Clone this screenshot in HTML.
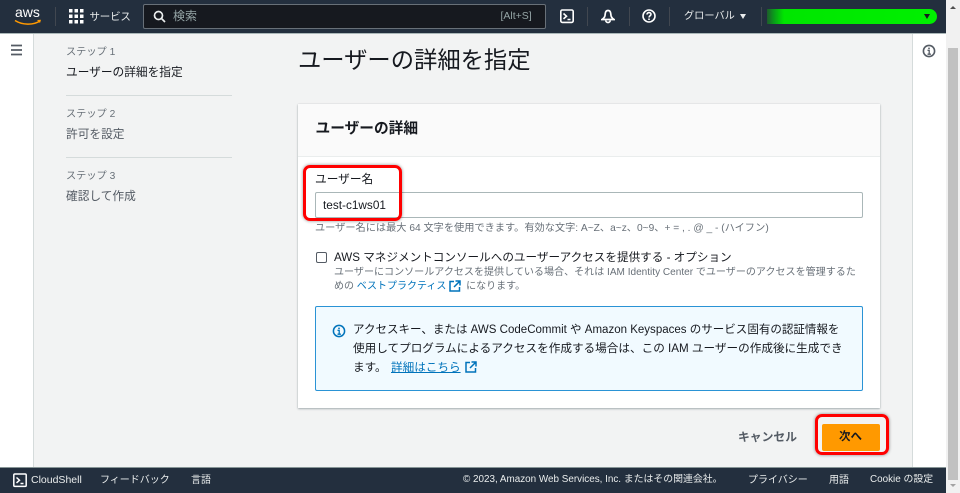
<!DOCTYPE html>
<html lang="ja"><head><meta charset="utf-8">
<style>
html,body{margin:0;padding:0;width:960px;height:493px;overflow:hidden;background:#f2f3f3}
body{position:relative;font-family:"Liberation Sans","Noto Sans CJK JP",sans-serif;color:#16191f}
.a{position:absolute}
.t{position:absolute;white-space:nowrap;line-height:16px}
svg{position:absolute;display:block}
.s{color:#687078}
.n{color:#eaeded}
a{color:#0073bb;text-decoration:none}
</style></head><body>
<!-- panels -->
<div class="a" style="left:0;top:33px;width:33px;height:435px;background:#fff;border-right:1px solid #d5dbdb"></div>
<div class="a" style="left:912px;top:33px;width:34px;height:435px;background:#fff;border-left:1px solid #d5dbdb;box-sizing:border-box"></div>
<!-- nav -->
<div class="a" style="left:0;top:0;width:946px;height:33.500px;background:#232f3e;border-bottom:1px solid #aab7b8;box-sizing:border-box"></div>
<div class="t" style="left:15px;top:5px;font-size:14px;color:#fff;line-height:14px">aws</div>
<svg style="left:14px;top:19px" width="28" height="7" viewBox="0 0 28 7"><path d="M1 1.500C8 6 19 6.500 26 2" stroke="#f90" stroke-width="1.500" fill="none"/><path d="M23 1l4-.3-1 3.300z" fill="#f90"/></svg>
<div class="a" style="left:55px;top:7px;width:1px;height:19px;background:#414750"></div>
<svg style="left:69px;top:9px" width="15" height="15" viewBox="0 0 15 15" fill="#fff"><rect x="0" y="0" width="3.500" height="3.500"/><rect x="5.500" y="0" width="3.500" height="3.500"/><rect x="11" y="0" width="3.500" height="3.500"/><rect x="0" y="5.500" width="3.500" height="3.500"/><rect x="5.500" y="5.500" width="3.500" height="3.500"/><rect x="11" y="5.500" width="3.500" height="3.500"/><rect x="0" y="11" width="3.500" height="3.500"/><rect x="5.500" y="11" width="3.500" height="3.500"/><rect x="11" y="11" width="3.500" height="3.500"/></svg>
<div class="t n" style="left:89.500px;top:9px;font-size:10.500px;letter-spacing:-.2px">サービス</div>
<div class="a" style="left:143px;top:4px;width:403px;height:25px;background:#16191f;border:1px solid #687078;border-radius:2px;box-sizing:border-box"></div>
<svg style="left:153px;top:10px" width="13" height="13" viewBox="0 0 13 13" fill="none" stroke="#eaeded" stroke-width="1.700"><circle cx="5.500" cy="5.500" r="4"/><path d="M8.500 8.500L12 12"/></svg>
<div class="t" style="left:173px;top:8px;font-size:12px;color:#95a5a6">検索</div>
<div class="t" style="left:500.500px;top:9px;font-size:10.500px;color:#95a5a6;line-height:15px">[Alt+S]</div>
<svg style="left:560px;top:9px" width="14" height="15" viewBox="0 0 14 15" fill="none" stroke="#fff" stroke-width="1.600"><rect x=".8" y="1" width="12.400" height="12.400" rx="1.500"/><path d="M3.500 4.500l3 2.700-3 2.700M7.500 10.500h3"/></svg>
<div class="a" style="left:587px;top:7px;width:1px;height:19px;background:#414750"></div>
<svg style="left:601px;top:9px" width="14" height="15" viewBox="0 0 14 15" fill="none" stroke="#fff" stroke-width="1.700"><path d="M7 1.500C4.500 1.500 4.200 4 4 6.500 3.800 8 2.500 9.500 1 10.500h12C11.500 9.500 10.200 8 10 6.500 9.800 4 9.500 1.500 7 1.500z"/><path d="M4.800 11.500a2.200 2 0 0 0 4.400 0"/></svg>
<div class="a" style="left:629px;top:7px;width:1px;height:19px;background:#414750"></div>
<svg style="left:642px;top:9px" width="14" height="14" viewBox="0 0 14 14" fill="none" stroke="#fff" stroke-width="1.600"><circle cx="7" cy="7" r="6"/><path d="M5 5.500C5 3 9 3 9 5.300 9 6.800 7 6.800 7 8.500"/><path d="M7 9.500v1.500"/></svg>
<div class="a" style="left:669px;top:7px;width:1px;height:19px;background:#414750"></div>
<div class="t n" style="left:684px;top:9px;font-size:10.200px">グローバル</div>
<div class="a" style="left:740px;top:14px;width:0;height:0;border:3.500px solid transparent;border-top:5px solid #eaeded;border-bottom:0"></div>
<div class="a" style="left:761px;top:7px;width:1px;height:19px;background:#414750"></div>
<div class="a" style="left:767px;top:9px;width:170px;height:15px;border-radius:0 8px 8px 0;background:linear-gradient(90deg,#1e5c2c 0,#0a9b1a 4%,#00e600 10%,#00f000 100%)"></div>
<div class="a" style="left:924px;top:14px;width:0;height:0;border:3.500px solid transparent;border-top:5px solid #16191f;border-bottom:0"></div>
<!-- hamburger, info -->
<svg style="left:10px;top:44px" width="13" height="12" viewBox="0 0 13 12" stroke="#545b64" stroke-width="1.700"><path d="M1 1.500h11M1 6h11M1 10.500h11"/></svg>
<svg style="left:922px;top:44px" width="14" height="14" viewBox="0 0 14 14" fill="none" stroke="#545b64" stroke-width="1.600"><circle cx="7" cy="7" r="5.600"/><path d="M5.500 6.300H7.200V10M5.500 10.200h3.400" stroke-width="1.300"/><path d="M7 3.600v1.400" stroke-width="1.600"/></svg>
<!-- steps -->
<div class="t s" style="left:66px;top:45px;font-size:10.200px">ステップ 1</div>
<div class="t" style="left:66px;top:65px;font-size:11.700px;color:#16191f">ユーザーの詳細を指定</div>
<div class="a" style="left:66px;top:95px;width:166px;height:1px;background:#d5dbdb"></div>
<div class="t s" style="left:66px;top:107px;font-size:10.200px">ステップ 2</div>
<div class="t s" style="left:66px;top:127px;font-size:11.700px;color:#545b64">許可を設定</div>
<div class="a" style="left:66px;top:157px;width:166px;height:1px;background:#d5dbdb"></div>
<div class="t s" style="left:66px;top:169px;font-size:10.200px">ステップ 3</div>
<div class="t s" style="left:66px;top:189px;font-size:11.700px;color:#545b64">確認して作成</div>
<!-- title -->
<div class="t" style="left:298px;top:44px;font-size:23.300px;line-height:32px;color:#16191f">ユーザーの詳細を指定</div>
<!-- card -->
<div class="a" style="left:298px;top:104px;width:582px;height:304px;background:#fff;box-shadow:0 1px 2px rgba(0,28,36,.3),0 0 1px rgba(0,28,36,.15)"></div>
<div class="a" style="left:298px;top:104px;width:582px;height:53px;background:#fafafa;border-bottom:1px solid #eaeded;box-sizing:border-box"></div>
<div class="t" style="left:315.500px;top:120px;font-size:14.700px;line-height:18px;font-weight:700">ユーザーの詳細</div>
<div class="t" style="left:315px;top:172px;font-size:11.700px;color:#16191f">ユーザー名</div>
<div class="a" style="left:315px;top:192px;width:548px;height:26px;background:#fff;border:1px solid #aab7b8;border-radius:2px;box-sizing:border-box"></div>
<div class="t" style="left:323px;top:197px;font-size:11.800px;color:#16191f">test-c1ws01</div>
<div class="t s" style="left:315px;top:221px;font-size:10.200px">ユーザー名には最大 64 文字を使用できます。有効な文字: A~Z、a~z、0~9、+ = , . @ _ - (ハイフン)</div>
<div class="a" style="left:316px;top:252px;width:9px;height:9px;background:#fff;border:1px solid #545b64;border-radius:2px"></div>
<div class="t" style="left:334px;top:250px;font-size:11.600px;color:#16191f">AWS マネジメントコンソールへのユーザーアクセスを提供する - オプション</div>
<div class="t s" style="left:334px;top:265px;font-size:10.050px">ユーザーにコンソールアクセスを提供している場合、それは IAM Identity Center でユーザーのアクセスを管理するた</div>
<div class="t s" style="left:334px;top:279px;font-size:10px">めの <a style="color:#0073bb">ベストプラクティス</a><span style="display:inline-block;width:17px"></span> になります。</div>
<svg style="left:449px;top:280px" width="12" height="12" viewBox="0 0 12 12" fill="none" stroke="#0073bb" stroke-width="1.500"><path d="M5 1.500H1v9.500h9.500V7M6.500 1h4.500v4.500M11 1L5 7"/></svg>
<!-- info box -->
<div class="a" style="left:315px;top:306px;width:548px;height:85px;background:#f1faff;border:1px solid #2a93d5;border-radius:2px;box-sizing:border-box"></div>
<svg style="left:332px;top:324px" width="14" height="14" viewBox="0 0 14 14" fill="none" stroke="#0073bb" stroke-width="1.500"><circle cx="7" cy="7" r="5.600"/><path d="M5.500 6.300H7.200V10M5.500 10.200h3.400" stroke-width="1.300"/><path d="M7 3.600v1.400" stroke-width="1.600"/></svg>
<div class="t" style="left:353px;top:322px;font-size:11.520px;color:#16191f">アクセスキー、または AWS CodeCommit や Amazon Keyspaces のサービス固有の認証情報を</div>
<div class="t" style="left:353px;top:341px;font-size:11.620px;color:#16191f">使用してプログラムによるアクセスを作成する場合は、この IAM ユーザーの作成後に生成でき</div>
<div class="t" style="left:353px;top:360px;font-size:11.600px;color:#16191f">ます。<a style="color:#0073bb;text-decoration:underline;position:absolute;left:38px;font-size:11.600px">詳細はこちら</a></div>
<svg style="left:465px;top:361px" width="12" height="12" viewBox="0 0 12 12" fill="none" stroke="#0073bb" stroke-width="1.500"><path d="M5 1.500H1v9.500h9.500V7M6.500 1h4.500v4.500M11 1L5 7"/></svg>
<!-- buttons -->
<div class="t" style="left:738px;top:429px;font-size:11.800px;font-weight:700;color:#545b64">キャンセル</div>
<div class="a" style="left:822px;top:424px;width:58px;height:27px;background:#ff9900;border-radius:2px"></div>
<div class="t" style="left:839px;top:429px;font-size:11.500px;font-weight:700;color:#16191f">次へ</div>
<!-- red highlights -->
<div class="a" style="left:303px;top:165px;width:93px;height:50px;border:3.500px solid #f00;border-radius:7px;box-shadow:0 0 3px rgba(0,0,0,.45)"></div>
<div class="a" style="left:815px;top:414px;width:68px;height:35px;border:3.500px solid #f00;border-radius:7px;box-shadow:0 0 3px rgba(0,0,0,.45)"></div>
<!-- footer -->
<div class="a" style="left:0;top:467px;width:946px;height:26px;background:#232f3e;border-top:1px solid #879596;box-sizing:border-box"></div>
<svg style="left:13px;top:473px" width="14" height="15" viewBox="0 0 14 15" fill="none" stroke="#fff" stroke-width="1.500"><rect x=".8" y="1" width="12.400" height="12.400" rx="1"/><path d="M3.500 4.500l3 2.700-3 2.700M7.500 10.500h3"/></svg>
<div class="t n" style="left:31px;top:472px;font-size:10.500px">CloudShell</div>
<div class="t n" style="left:100px;top:473px;font-size:10px">フィードバック</div>
<div class="t n" style="left:191px;top:473px;font-size:10px">言語</div>
<div class="t n" style="left:463px;top:472px;font-size:9.900px">© 2023, Amazon Web Services, Inc. またはその関連会社。</div>
<div class="t n" style="left:748px;top:473px;font-size:10px">プライバシー</div>
<div class="t n" style="left:829px;top:473px;font-size:10px">用語</div>
<div class="t n" style="left:870px;top:472px;font-size:9.900px">Cookie の設定</div>
<!-- scrollbar -->
<div class="a" style="left:946px;top:0;width:14px;height:493px;background:#f1f1f1"></div>
<div class="a" style="left:948px;top:48px;width:10px;height:432px;background:#c1c1c1"></div>
<div class="a" style="left:950px;top:6px;width:0;height:0;border:3px solid transparent;border-bottom:3px solid #505050;border-top:0"></div>
<div class="a" style="left:950px;top:484px;width:0;height:0;border:3px solid transparent;border-top:3px solid #a3a3a3;border-bottom:0"></div>
</body></html>
